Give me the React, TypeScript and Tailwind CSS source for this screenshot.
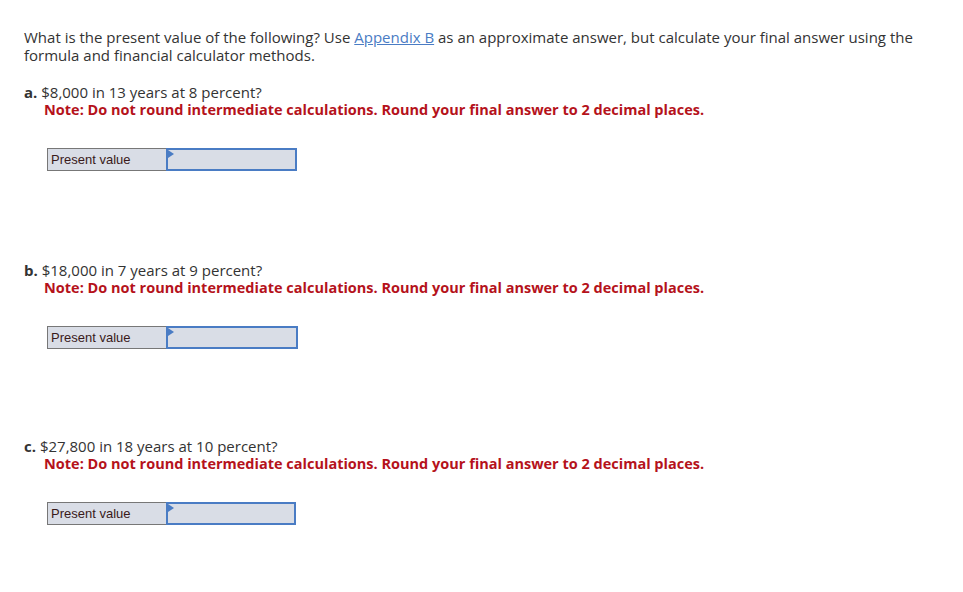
import React from "react";

function Row({ inputW }: { inputW: string }) {
  return (
    <div className="flex h-[23px] ml-[23px]">
      <div className="w-[120px] h-full border border-[#777] bg-[#d9dde6] text-[13px] text-[#3a1a1a] flex items-center pl-[3px]" style={{ fontFamily: '"Liberation Sans", Arial, sans-serif' }}>
        Present value
      </div>
      <div className={`relative h-full ${inputW} border-2 border-[#4a7cc4] bg-[#d9dde6] -ml-px`}>
        <div className="absolute left-0 top-0 w-0 h-0 border-t-[4px] border-b-[4px] border-l-[6px] border-t-transparent border-b-transparent border-l-[#4a7cc4]" />
      </div>
    </div>
  );
}

function Part({ letter, q, inputW, mt }: { letter: string; q: string; inputW: string; mt: string }) {
  return (
    <div className={mt}>
      <div className="text-[15px] leading-[18px] text-[#333]">
        <span className="font-bold">{letter}.</span> {q}
      </div>
      <div className="pl-[20px] text-[14.5px] leading-[18px] font-bold text-[#b5121b]">
        Note: Do not round intermediate calculations. Round your final answer to 2 decimal places.
      </div>
      <div className="mt-[29px]">
        <Row inputW={inputW} />
      </div>
    </div>
  );
}

export default function App() {
  return (
    <div className="w-[963px] h-[592px] bg-white px-[24px] pt-[28px]" style={{ fontFamily: '"Open Sans", Lato, sans-serif' }}>
      <p className="text-[15px] leading-[18px] text-[#333] max-w-[900px]">
        What is the present value of the following? Use{" "}
        <a className="text-[#4a7cc4] underline">Appendix B</a> as an approximate answer, but calculate your final answer using the formula and financial calculator methods.
      </p>
      <Part letter="a" q="$8,000 in 13 years at 8 percent?" inputW="w-[131px]" mt="mt-[19px]" />
      <Part letter="b" q="$18,000 in 7 years at 9 percent?" inputW="w-[132px]" mt="mt-[90px]" />
      <Part letter="c" q="$27,800 in 18 years at 10 percent?" inputW="w-[130px]" mt="mt-[88px]" />
    </div>
  );
}
